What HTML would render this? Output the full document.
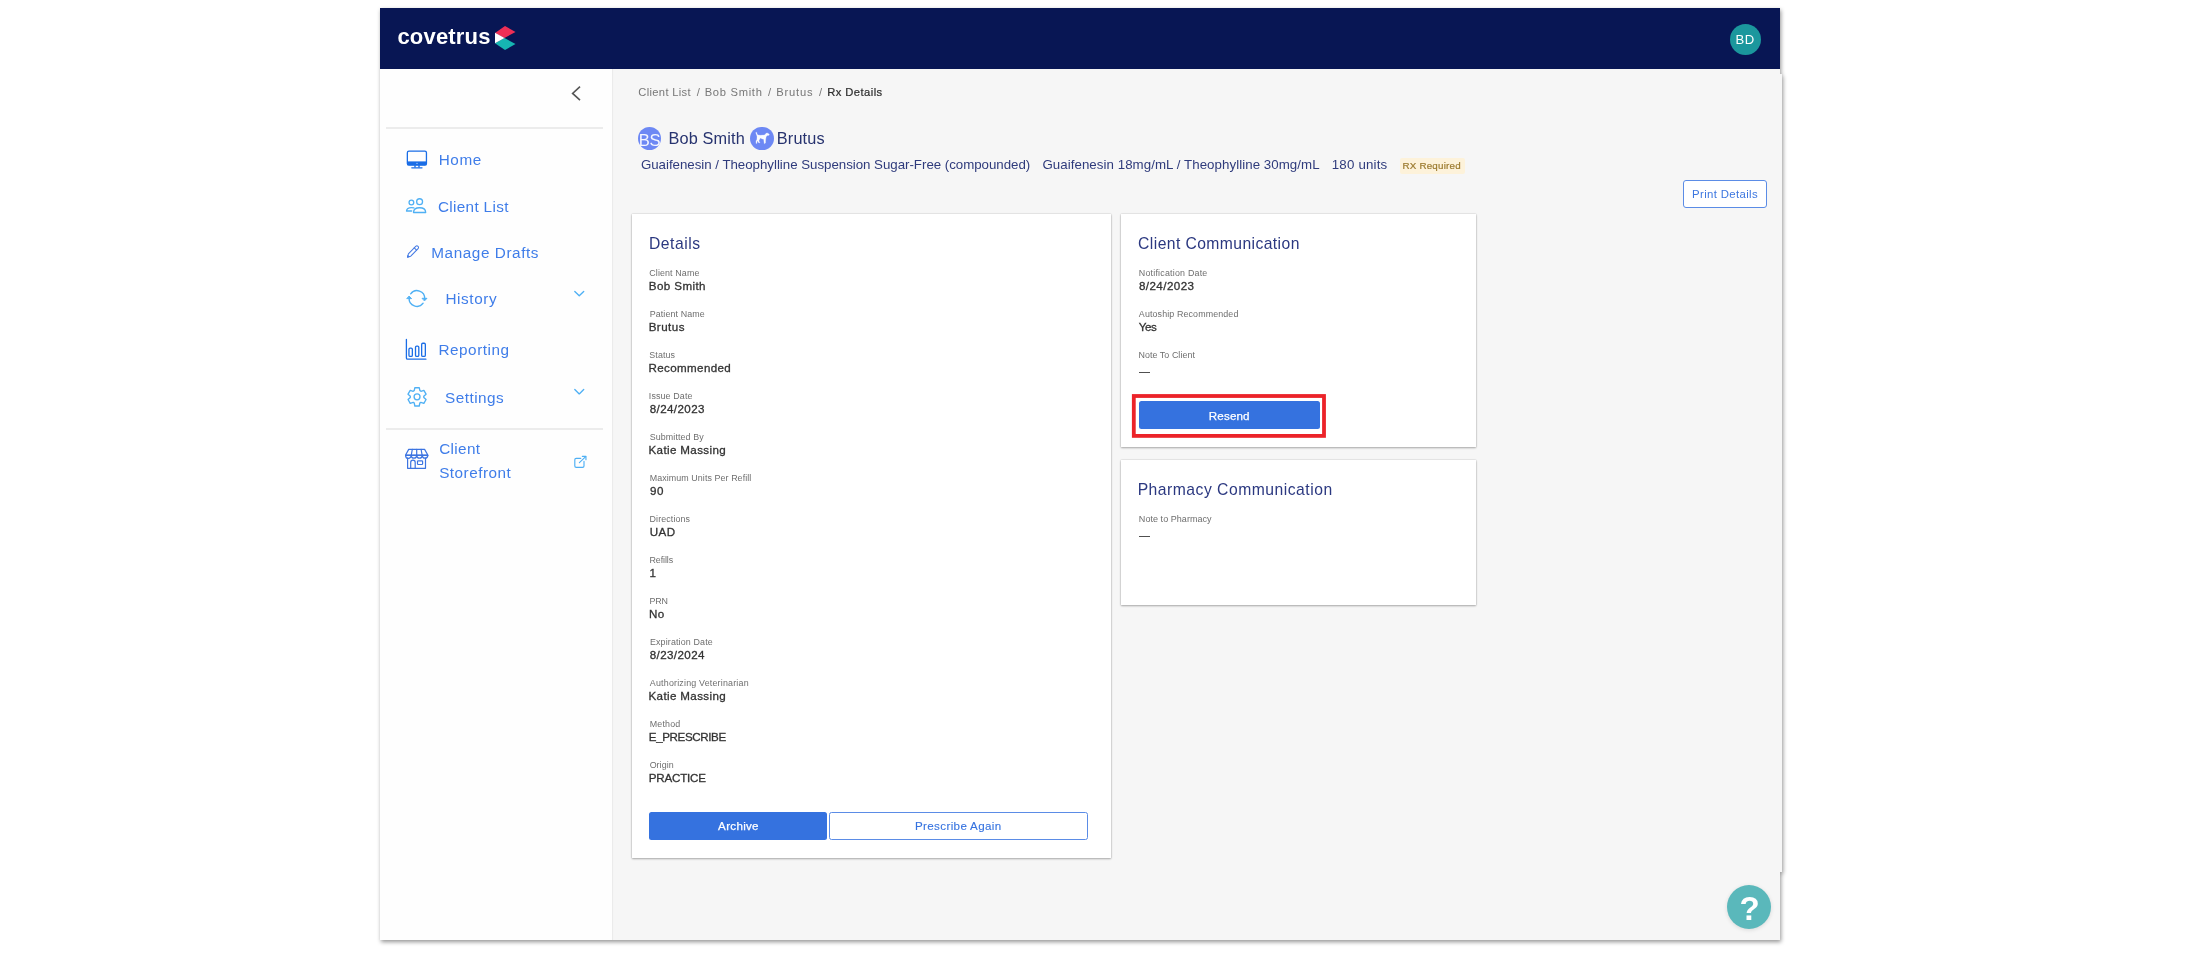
<!DOCTYPE html>
<html>
<head>
<meta charset="utf-8">
<title>Rx Details</title>
<style>
*{box-sizing:border-box;margin:0;padding:0}
html,body{width:2200px;height:958px;background:#fff;overflow:hidden}
body{font-family:"Liberation Sans",sans-serif;position:relative;color:#333}
.a{position:absolute}
.t{position:absolute;white-space:nowrap}
#shw{left:380px;top:8px;width:1402px;height:932px;filter:drop-shadow(1px 2px 2px rgba(0,0,0,.42))}
#frame{left:0;top:0;width:1402px;height:932px;background:#f6f6f6;clip-path:polygon(0 0,1400px 0,1400px 66px,1402px 66px,1402px 864px,1400px 864px,1400px 932px,0 932px)}
#hdr{left:380px;top:8px;width:1400px;height:61px;background:#081654}
#side{left:380px;top:69px;width:231.8px;height:871px;background:#fefefe;box-shadow:1px 0 1px rgba(0,0,0,.045)}
.hr{left:386px;width:217px;height:2px;background:#ececec}
.card{background:#fff;box-shadow:0 1px 2px rgba(0,0,0,.28),0 0 1.5px rgba(0,0,0,.22)}
.pri{background:#3572df;border-radius:2px}
.sec{background:#fff;border:1px solid #5b8ce6;border-radius:2px}
.circ{border-radius:50%}
svg{position:absolute;overflow:visible}
#txt{position:absolute;left:0;top:0;width:2200px;height:958px;will-change:transform}
</style>
</head>
<body>
<div class="a" id="shw"><div class="a" id="frame"></div></div>
<div class="a" id="hdr"></div>
<div class="a" id="side"></div>
<div class="a hr" style="top:127px"></div>
<div class="a hr" style="top:428px"></div>
<!-- logo -->
<svg style="left:495px;top:26px" width="21" height="24" viewBox="0 0 21 24"><polygon points="0,7 10,0 20.5,6 9.5,12" fill="#ee2f56"/><polygon points="0,17.2 9.5,12 20.5,18 10,24" fill="#16b5b2"/><polygon points="0,6.8 9.6,12 0,17.3" fill="#fff"/></svg>
<!-- user avatar -->
<div class="a circ" style="left:1729.5px;top:23.5px;width:31px;height:31px;background:#1b979d"></div>
<!-- collapse chevron -->
<svg style="left:570px;top:85px" width="12" height="17" viewBox="0 0 12 17"><polyline points="10,1.6 2.6,8.4 10,15.2" fill="none" stroke="#555" stroke-width="1.6" stroke-linejoin="miter"/></svg>
<!-- name avatars -->
<div class="a circ" style="left:637.5px;top:126.8px;width:23.5px;height:23.5px;background:#6d88f4;overflow:hidden"></div>
<div class="a circ" style="left:750.3px;top:126.8px;width:23.5px;height:23.5px;background:#6d88f4"></div>
<!-- RX badge -->
<div class="a" style="left:1399.5px;top:157.5px;width:65px;height:16.8px;background:#fdf2da;border-radius:2px"></div>
<!-- print details -->
<div class="a sec" style="left:1683px;top:180px;width:84px;height:28px;border-radius:3px"></div>
<!-- cards -->
<div class="a card" style="left:631.5px;top:213.8px;width:479.8px;height:643.9px"></div>
<div class="a card" style="left:1120.7px;top:213.8px;width:355.8px;height:233.2px"></div>
<div class="a card" style="left:1120.7px;top:460px;width:355.8px;height:145.2px"></div>
<!-- buttons -->
<div class="a pri" style="left:649.3px;top:811.6px;width:177.3px;height:28px;border-radius:2.5px"></div>
<div class="a sec" style="left:829px;top:811.6px;width:258.6px;height:28px;border-radius:2.5px"></div>
<svg style="left:0;top:0" width="2200" height="958"><rect x="1133.8" y="396" width="190.2" height="39.9" fill="none" stroke="#ec2329" stroke-width="3.8"/></svg>
<div class="a pri" style="left:1138.8px;top:401.2px;width:180.9px;height:28.2px;border-radius:2.5px"></div>
<!-- dashes -->
<div class="a" style="left:1139px;top:372px;width:11.4px;height:1px;background:#505050"></div>
<div class="a" style="left:1139px;top:536px;width:11.4px;height:1px;background:#505050"></div>
<!-- help -->
<div class="a circ" style="left:1727.1px;top:885.2px;width:44px;height:44px;background:#5ab8bb;box-shadow:0 1px 4px rgba(0,0,0,.12)"></div>
<svg style="left:0;top:0" width="2200" height="958" viewBox="0 0 2200 958" fill="none" stroke-linecap="round" stroke-linejoin="round" ><g stroke="#1a6de6" stroke-width="1.3"><rect x="407.35" y="151.05" width="19.1" height="14.1" rx="1.6"/><path d="M411.8,167.85H422"/></g><g fill="#1a6de6"><rect x="407.4" y="161.4" width="19" height="3.8"/><rect x="414.3" y="165.2" width="1.4" height="2.3"/><rect x="418.3" y="165.2" width="1.4" height="2.3"/></g><rect x="416.2" y="162.9" width="1.6" height="0.9" fill="#9cc3f5"/><g stroke="#4fb0f4" stroke-width="1.3"><circle cx="419.6" cy="201.7" r="2.95"/><circle cx="411.4" cy="202.5" r="2.35"/><path d="M413.5,212.5 C413.6,209 416.2,207.75 419.6,207.75 C423,207.75 425.6,209 425.7,212.5 Z"/><path d="M413.9,207.9 C413,207.7 412.2,207.6 411.4,207.6 C408.6,207.6 406.7,208.9 406.5,211 H411.7"/></g><g transform="translate(407.05,257.65) rotate(-45.8)" stroke="#457be4" stroke-width="1.05"><path d="M0.9,0 L3.6,-1.65 H14.1 A1.65,1.65 0 0 1 14.1,1.65 H3.6 Z"/><path d="M12,-1.65 V1.65"/><path d="M0.6,0 L2,-0.85 V0.85 Z" fill="#3c74e1"/></g><g stroke="#4fb0f4" stroke-width="1.4"><path d="M410.67,293.81 A7.8,7.8 0 0 1 424.70,298.77"/><path d="M423.13,303.19 A7.8,7.8 0 0 1 409.10,298.23"/></g><g fill="#4fb0f4" stroke="#4fb0f4" stroke-width="0.9"><path d="M422.4,298.3 H427 L424.7,300.7 Z"/><path d="M407.1,298.6 H411.6 L409.3,296.3 Z"/></g><g stroke="#1a6de6" stroke-width="1.3"><path d="M406.4,339.5 V357.9 Q406.4,359.2 407.7,359.2 H425.9"/><rect x="408.95" y="348.15" width="3.4" height="8.2" rx="1.2"/><rect x="415.5" y="346.05" width="3.3" height="10.3" rx="1.2"/><rect x="421.65" y="343.25" width="3.7" height="13.1" rx="1.2"/></g><g stroke="#4fb0f4" stroke-width="1.35"><path d="M414.20,390.73 L414.86,387.71 L419.24,387.71 L419.90,390.73 A6.08,6.08 0 0 1 420.92,391.32 L423.87,390.38 L426.06,394.18 L423.77,396.26 A6.08,6.08 0 0 1 423.77,397.44 L426.06,399.52 L423.87,403.32 L420.92,402.38 A6.08,6.08 0 0 1 419.90,402.97 L419.24,405.99 L414.86,405.99 L414.20,402.97 A6.08,6.08 0 0 1 413.18,402.38 L410.23,403.32 L408.04,399.52 L410.33,397.44 A6.08,6.08 0 0 1 410.33,396.26 L408.04,394.18 L410.23,390.38 L413.18,391.32 A6.08,6.08 0 0 1 414.20,390.73 Z"/><circle cx="417.05" cy="396.85" r="2.95"/></g><g stroke="#3c74e1" stroke-width="1.2"><path d="M405.6,455 L408.7,449.4 H424.6 L427.8,455 Z"/><path d="M405.6,455.4 H427.8"/><path d="M412.3,449.4 L411.3,455 M416.7,449.4 V455 M421.1,449.4 L422.1,455"/><path d="M405.6,455.4 A2.77,3.0 0 0 0 411.15,455.4"/><path d="M411.15,455.4 A2.78,3.0 0 0 0 416.7,455.4"/><path d="M416.7,455.4 A2.78,3.0 0 0 0 422.25,455.4"/><path d="M422.25,455.4 A2.78,3.0 0 0 0 427.8,455.4"/><path d="M407.6,458 V468.3 H425.5 V458"/><path d="M410.7,468.3 V462.4 A2.25,2.2 0 0 1 415.2,462.4 V468.3"/><rect x="417.5" y="460.8" width="5.1" height="3.7" rx="0.8"/></g><g stroke="#4fb0f4" stroke-width="1.15"><path d="M580.8,458.3 H576.2 Q574.8,458.3 574.8,459.7 V466 Q574.8,467.4 576.2,467.4 H582.6 Q584,467.4 584,466 V461.3"/><path d="M579.4,462.6 L585.7,456.6"/><path d="M582.3,456.35 H585.95 V459.7"/></g><path d="M574.8,291.40 L579.25,295.80 L583.7,291.40" stroke="#4fb0f4" stroke-width="1.35"/><path d="M574.8,389.50 L579.25,393.90 L583.7,389.50" stroke="#4fb0f4" stroke-width="1.35"/><polygon points="756.05,132.39 756.68,132.24 756.99,133.64 757.78,135.05 760.28,135.37 764.35,135.05 765.60,133.96 766.54,133.02 767.95,133.18 769.42,134.58 768.89,135.37 767.32,135.46 766.39,136.31 765.92,137.72 765.60,139.91 765.45,143.04 764.35,143.73 763.97,141.79 763.79,139.28 762.47,138.97 760.28,137.97 759.65,139.28 758.78,141.10 759.81,142.25 759.40,142.88 758.15,142.16 757.78,140.91 757.15,140.97 756.84,143.35 756.09,143.41 756.02,141.00 756.90,139.44 757.09,136.78 756.68,134.90 756.05,133.64" fill="#fbfcff" stroke="#fbfcff" stroke-width="0.3"/></svg>

<div id="txt">
<span class="t" style="left:397.40px;top:27.00px;font-size:22px;color:#fff;line-height:20px;font-weight:700;letter-spacing:0.200px;">covetrus</span>
<span class="t" style="left:1735.50px;top:30.00px;font-size:13.1px;color:#fff;line-height:20px;letter-spacing:0.500px;">BD</span>
<span class="t" style="left:638.70px;top:131.00px;font-size:16.6px;color:#f4f6ff;line-height:20px;letter-spacing:-0.200px;">BS</span>
<span class="t" style="left:1739.60px;top:899.00px;font-size:33px;color:#fff;line-height:20px;font-weight:700;">?</span>
<span class="t" style="left:638.35px;top:82.00px;font-size:11.2px;color:#777;line-height:20px;letter-spacing:0.310px;">Client List</span>
<span class="t" style="left:696.75px;top:82.00px;font-size:11.2px;color:#777;line-height:20px;">/</span>
<span class="t" style="left:704.70px;top:82.00px;font-size:11.2px;color:#777;line-height:20px;letter-spacing:0.700px;">Bob Smith</span>
<span class="t" style="left:767.95px;top:82.00px;font-size:11.2px;color:#777;line-height:20px;">/</span>
<span class="t" style="left:776.30px;top:82.00px;font-size:11.2px;color:#777;line-height:20px;letter-spacing:0.800px;">Brutus</span>
<span class="t" style="left:818.95px;top:82.00px;font-size:11.2px;color:#777;line-height:20px;">/</span>
<span class="t" style="left:827.20px;top:82.00px;font-size:11.2px;color:#2e2e2e;line-height:20px;-webkit-text-stroke:0.22px #2e2e2e;letter-spacing:0.444px;">Rx Details</span>
<span class="t" style="left:438.70px;top:150.00px;font-size:15.3px;color:#3f7de9;line-height:20px;letter-spacing:0.600px;">Home</span>
<span class="t" style="left:437.95px;top:197.00px;font-size:15.3px;color:#3f7de9;line-height:20px;letter-spacing:0.330px;">Client List</span>
<span class="t" style="left:431.30px;top:243.00px;font-size:15.3px;color:#3f7de9;line-height:20px;letter-spacing:0.567px;">Manage Drafts</span>
<span class="t" style="left:445.38px;top:289.00px;font-size:15.3px;color:#3f7de9;line-height:20px;letter-spacing:0.625px;">History</span>
<span class="t" style="left:438.45px;top:340.00px;font-size:15.3px;color:#3f7de9;line-height:20px;letter-spacing:0.538px;">Reporting</span>
<span class="t" style="left:445.10px;top:388.00px;font-size:15.3px;color:#3f7de9;line-height:20px;letter-spacing:0.457px;">Settings</span>
<span class="t" style="left:439.20px;top:439.00px;font-size:15.3px;color:#3f7de9;line-height:20px;letter-spacing:0.360px;">Client</span>
<span class="t" style="left:439.15px;top:463.00px;font-size:15.3px;color:#3f7de9;line-height:20px;letter-spacing:0.500px;">Storefront</span>
<span class="t" style="left:668.58px;top:128.00px;font-size:16.3px;color:#27336f;line-height:20px;letter-spacing:0.131px;">Bob Smith</span>
<span class="t" style="left:776.80px;top:128.00px;font-size:16.3px;color:#27336f;line-height:20px;letter-spacing:0.160px;">Brutus</span>
<span class="t" style="left:640.90px;top:155.00px;font-size:13.3px;color:#2f3b7c;line-height:20px;letter-spacing:-0.023px;">Guaifenesin / Theophylline Suspension Sugar-Free (compounded)</span>
<span class="t" style="left:1042.38px;top:155.00px;font-size:13.3px;color:#2f3b7c;line-height:20px;letter-spacing:0.055px;">Guaifenesin 18mg/mL / Theophylline 30mg/mL</span>
<span class="t" style="left:1331.75px;top:155.00px;font-size:13.3px;color:#2f3b7c;line-height:20px;letter-spacing:0.188px;">180 units</span>
<span class="t" style="left:1402.50px;top:156.00px;font-size:9.8px;color:#9b7a2e;line-height:20px;-webkit-text-stroke:0.2px #9b7a2e;letter-spacing:0.200px;">RX Required</span>
<span class="t" style="left:1692.10px;top:184.00px;font-size:11.4px;color:#3d77e0;line-height:20px;letter-spacing:0.350px;">Print Details</span>
<span class="t" style="left:648.88px;top:234.00px;font-size:15.7px;color:#2b3880;line-height:20px;letter-spacing:0.542px;">Details</span>
<span class="t" style="left:1138.10px;top:234.00px;font-size:15.7px;color:#2b3880;line-height:20px;letter-spacing:0.411px;">Client Communication</span>
<span class="t" style="left:1137.65px;top:480.00px;font-size:15.7px;color:#2b3880;line-height:20px;letter-spacing:0.500px;">Pharmacy Communication</span>
<span class="t" style="left:649.30px;top:263.00px;font-size:8.9px;color:#6e6e6e;line-height:20px;letter-spacing:0.120px;">Client Name</span>
<span class="t" style="left:648.80px;top:276.00px;font-size:11.6px;color:#333;line-height:20px;-webkit-text-stroke:0.3px #333;letter-spacing:0.400px;">Bob Smith</span>
<span class="t" style="left:649.65px;top:304.00px;font-size:8.9px;color:#6e6e6e;line-height:20px;letter-spacing:0.118px;">Patient Name</span>
<span class="t" style="left:648.65px;top:317.00px;font-size:11.6px;color:#333;line-height:20px;-webkit-text-stroke:0.3px #333;letter-spacing:0.460px;">Brutus</span>
<span class="t" style="left:649.35px;top:345.00px;font-size:8.9px;color:#6e6e6e;line-height:20px;letter-spacing:0.100px;">Status</span>
<span class="t" style="left:648.40px;top:358.00px;font-size:11.6px;color:#333;line-height:20px;-webkit-text-stroke:0.3px #333;letter-spacing:0.380px;">Recommended</span>
<span class="t" style="left:648.80px;top:386.00px;font-size:8.9px;color:#6e6e6e;line-height:20px;letter-spacing:0.133px;">Issue Date</span>
<span class="t" style="left:649.65px;top:399.00px;font-size:11.6px;color:#333;line-height:20px;-webkit-text-stroke:0.3px #333;letter-spacing:0.413px;">8/24/2023</span>
<span class="t" style="left:649.65px;top:427.00px;font-size:8.9px;color:#6e6e6e;line-height:20px;letter-spacing:0.118px;">Submitted By</span>
<span class="t" style="left:648.50px;top:440.00px;font-size:11.6px;color:#333;line-height:20px;-webkit-text-stroke:0.3px #333;letter-spacing:0.367px;">Katie Massing</span>
<span class="t" style="left:649.75px;top:468.00px;font-size:8.9px;color:#6e6e6e;line-height:20px;letter-spacing:0.083px;">Maximum Units Per Refill</span>
<span class="t" style="left:650.00px;top:481.00px;font-size:11.6px;color:#333;line-height:20px;-webkit-text-stroke:0.3px #333;letter-spacing:0.500px;">90</span>
<span class="t" style="left:649.60px;top:509.00px;font-size:8.9px;color:#6e6e6e;line-height:20px;letter-spacing:0.111px;">Directions</span>
<span class="t" style="left:649.67px;top:522.00px;font-size:11.6px;color:#333;line-height:20px;-webkit-text-stroke:0.3px #333;letter-spacing:0.500px;">UAD</span>
<span class="t" style="left:649.50px;top:550.00px;font-size:8.9px;color:#6e6e6e;line-height:20px;letter-spacing:-0.100px;">Refills</span>
<span class="t" style="left:649.55px;top:563.00px;font-size:11.6px;color:#333;line-height:20px;-webkit-text-stroke:0.3px #333;">1</span>
<span class="t" style="left:649.40px;top:591.00px;font-size:8.9px;color:#6e6e6e;line-height:20px;letter-spacing:-0.100px;">PRN</span>
<span class="t" style="left:649.00px;top:604.00px;font-size:11.6px;color:#333;line-height:20px;-webkit-text-stroke:0.3px #333;letter-spacing:0.500px;">No</span>
<span class="t" style="left:649.95px;top:632.00px;font-size:8.9px;color:#6e6e6e;line-height:20px;letter-spacing:0.150px;">Expiration Date</span>
<span class="t" style="left:649.65px;top:645.00px;font-size:11.6px;color:#333;line-height:20px;-webkit-text-stroke:0.3px #333;letter-spacing:0.413px;">8/23/2024</span>
<span class="t" style="left:649.85px;top:673.00px;font-size:8.9px;color:#6e6e6e;line-height:20px;letter-spacing:0.196px;">Authorizing Veterinarian</span>
<span class="t" style="left:648.50px;top:686.00px;font-size:11.6px;color:#333;line-height:20px;-webkit-text-stroke:0.3px #333;letter-spacing:0.367px;">Katie Massing</span>
<span class="t" style="left:649.75px;top:714.00px;font-size:8.9px;color:#6e6e6e;line-height:20px;letter-spacing:0.180px;">Method</span>
<span class="t" style="left:648.80px;top:727.00px;font-size:11.6px;color:#333;line-height:20px;-webkit-text-stroke:0.3px #333;letter-spacing:-0.380px;">E_PRESCRIBE</span>
<span class="t" style="left:649.65px;top:755.00px;font-size:8.9px;color:#6e6e6e;line-height:20px;letter-spacing:0.060px;">Origin</span>
<span class="t" style="left:648.85px;top:768.00px;font-size:11.6px;color:#333;line-height:20px;-webkit-text-stroke:0.3px #333;letter-spacing:-0.214px;">PRACTICE</span>
<span class="t" style="left:1138.85px;top:263.00px;font-size:8.9px;color:#6e6e6e;line-height:20px;letter-spacing:0.206px;">Notification Date</span>
<span class="t" style="left:1138.90px;top:276.00px;font-size:11.6px;color:#333;line-height:20px;-webkit-text-stroke:0.3px #333;letter-spacing:0.450px;">8/24/2023</span>
<span class="t" style="left:1138.85px;top:304.00px;font-size:8.9px;color:#6e6e6e;line-height:20px;letter-spacing:0.121px;">Autoship Recommended</span>
<span class="t" style="left:1138.80px;top:317.00px;font-size:11.6px;color:#333;line-height:20px;-webkit-text-stroke:0.3px #333;letter-spacing:-0.500px;">Yes</span>
<span class="t" style="left:1138.45px;top:345.00px;font-size:8.9px;color:#6e6e6e;line-height:20px;letter-spacing:0.069px;">Note To Client</span>
<span class="t" style="left:1138.85px;top:509.00px;font-size:9.0px;color:#6e6e6e;line-height:20px;letter-spacing:0.047px;">Note to Pharmacy</span>
<span class="t" style="left:718.10px;top:816.00px;font-size:11.6px;color:#fff;line-height:20px;-webkit-text-stroke:0.25px #fff;letter-spacing:0.300px;">Archive</span>
<span class="t" style="left:915.00px;top:816.00px;font-size:11.6px;color:#3572df;line-height:20px;-webkit-text-stroke:0.1px #3572df;letter-spacing:0.357px;">Prescribe Again</span>
<span class="t" style="left:1208.80px;top:406.00px;font-size:11.6px;color:#fff;line-height:20px;-webkit-text-stroke:0.25px #fff;letter-spacing:0.160px;">Resend</span>
</div>
</body>
</html>
